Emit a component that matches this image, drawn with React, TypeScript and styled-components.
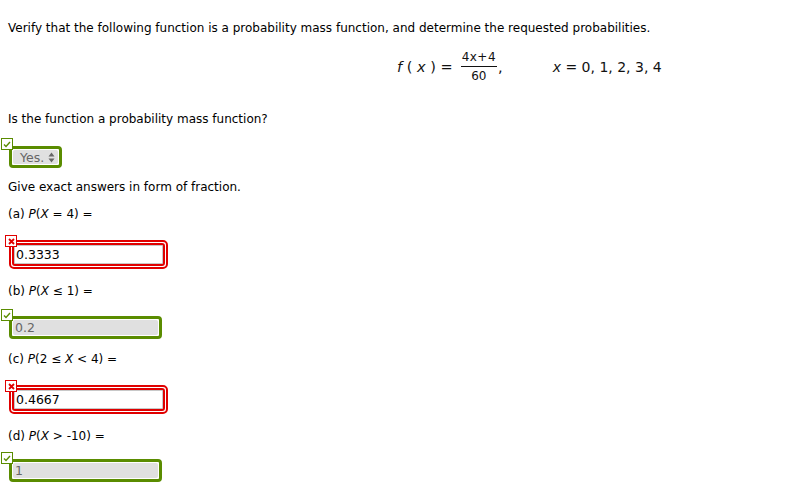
import styled, { createGlobalStyle } from "styled-components";

const GlobalStyle = createGlobalStyle`
  body {
    margin: 0;
    background: #fff;
    font-family: "DejaVu Sans", Verdana, sans-serif;
    font-size: 12px;
    color: #000;
  }
`;

const RED = "#e00000";
const GREEN = "#5a8c00";

const Page = styled.div`
  padding: 20px 8px 0 8px;
  width: 802px;
  box-sizing: border-box;
`;

const Line = styled.div<{ $top?: number }>`
  line-height: 16px;
  margin-top: ${p => p.$top ?? 0}px;
  white-space: nowrap;
`;

const Formula = styled.div`
  display: flex;
  align-items: center;
  margin-top: 11px;
  margin-left: 389px;
  height: 40px;
  font-size: 14.5px;
  color: #111;
`;

const Fn = styled.span`
  i { font-style: italic; }
`;

const Frac = styled.span`
  display: inline-flex;
  flex-direction: column;
  align-items: center;
  margin: 0 1px 0 8px;
  font-size: 12px;
  line-height: 15px;
  span:first-child {
    border-bottom: 1px solid #111;
    padding: 0 1px 1px;
    letter-spacing: 0.5px;
  }
  span:last-child {
    padding-top: 2px;
  }
`;

const Domain = styled.span`
  margin-left: 50px;
  font-size: 14px;
  i { font-style: italic; }
`;

const Answer = styled.div<{ $top: number; $w: number }>`
  position: relative;
  margin-top: ${p => p.$top}px;
  margin-left: 1px;
  width: ${p => p.$w}px;
`;

const Mark = styled.span<{ $ok: boolean; $dx: number; $dy: number }>`
  position: absolute;
  left: ${p => p.$dx}px;
  top: ${p => p.$dy}px;
  width: 12px;
  height: 12px;
  box-sizing: border-box;
  border: 1px solid ${p => (p.$ok ? GREEN : RED)};
  background: #fff;
  display: flex;
  align-items: center;
  justify-content: center;
  z-index: 1;
`;

const RedOuter = styled.div`
  border: 2px solid ${RED};
  border-radius: 5px;
  padding: 1px;
  background: #fff;
`;

const RedInner = styled.div`
  height: 19px;
  border: 2px solid ${RED};
  border-radius: 3px;
  box-shadow: inset 0 0 0 1px #c8c8c8;
  padding: 0 2px;
  line-height: 19px;
  background: #fff;
  color: #000;
  font-size: 12.5px;
`;

const GreenOuter = styled.div<{ $h: number }>`
  height: ${p => p.$h}px;
  box-sizing: border-box;
  border: 3px solid ${GREEN};
  border-radius: 4px;
  padding: 1px;
  background: #fff;
`;

const GreenInner = styled.div`
  height: 100%;
  background: #e0e0e0;
  border-radius: 2px;
  padding: 0 2px;
  display: flex;
  align-items: center;
  gap: 4px;
  color: #666;
  font-size: 12.5px;
`;

const SelectText = styled.span`
  margin-left: 5px;
`;

const Arrows = styled.svg`
  display: block;
`;

function Check() {
  return (
    <svg width="8" height="7" viewBox="0 0 8 7">
      <path d="M1 3.5 L3 5.5 L7 1" fill="none" stroke={GREEN} strokeWidth="1.4" />
    </svg>
  );
}

function Cross() {
  return (
    <svg width="7" height="7" viewBox="0 0 7 7">
      <path d="M1 1 L6 6 M6 1 L1 6" fill="none" stroke={RED} strokeWidth="1.8" />
    </svg>
  );
}

function Wrong({ value, top }: { value: string; top: number }) {
  return (
    <Answer $top={top} $w={159}>
      <Mark $ok={false} $dx={-4} $dy={-5}><Cross /></Mark>
      <RedOuter>
        <RedInner>{value}</RedInner>
      </RedOuter>
    </Answer>
  );
}

function Right({ value, top }: { value: string; top: number }) {
  return (
    <Answer $top={top} $w={153}>
      <Mark $ok={true} $dx={-8} $dy={-7}><Check /></Mark>
      <GreenOuter $h={23}>
        <GreenInner>{value}</GreenInner>
      </GreenOuter>
    </Answer>
  );
}

export default function App() {
  return (
    <Page>
      <GlobalStyle />
      <Line>
        Verify that the following function is a probability mass function, and determine the requested probabilities.
      </Line>
      <Formula>
        <Fn><i>f</i> ( <i>x</i> ) =</Fn>
        <Frac>
          <span>4x+4</span>
          <span>60</span>
        </Frac>
        <span>,</span>
        <Domain><i>x</i> = 0, 1, 2, 3, 4</Domain>
      </Formula>
      <Line $top={24}>Is the function a probability mass function?</Line>
      <Answer $top={19} $w={53}>
        <Mark $ok={true} $dx={-8} $dy={-8}><Check /></Mark>
        <GreenOuter $h={22}>
          <GreenInner>
            <SelectText>Yes.</SelectText>
            <Arrows width="7" height="11" viewBox="0 0 7 11">
              <path d="M3.5 0.5 L6.5 4.5 L0.5 4.5 Z M3.5 10.5 L6.5 6.5 L0.5 6.5 Z" fill="#666" />
            </Arrows>
          </GreenInner>
        </GreenOuter>
      </Answer>
      <Line $top={11}>Give exact answers in form of fraction.</Line>
      <Line $top={11}>(a) <i>P</i>(<i>X</i> = 4) =</Line>
      <Wrong value="0.3333" top={18} />
      <Line $top={14}>(b) <i>P</i>(<i>X</i> ≤ 1) =</Line>
      <Right value="0.2" top={17} />
      <Line $top={12}>(c) <i>P</i>(2 ≤ <i>X</i> &lt; 4) =</Line>
      <Wrong value="0.4667" top={18} />
      <Line $top={14}>(d) <i>P</i>(<i>X</i> &gt; -10) =</Line>
      <Right value="1" top={15} />
    </Page>
  );
}
